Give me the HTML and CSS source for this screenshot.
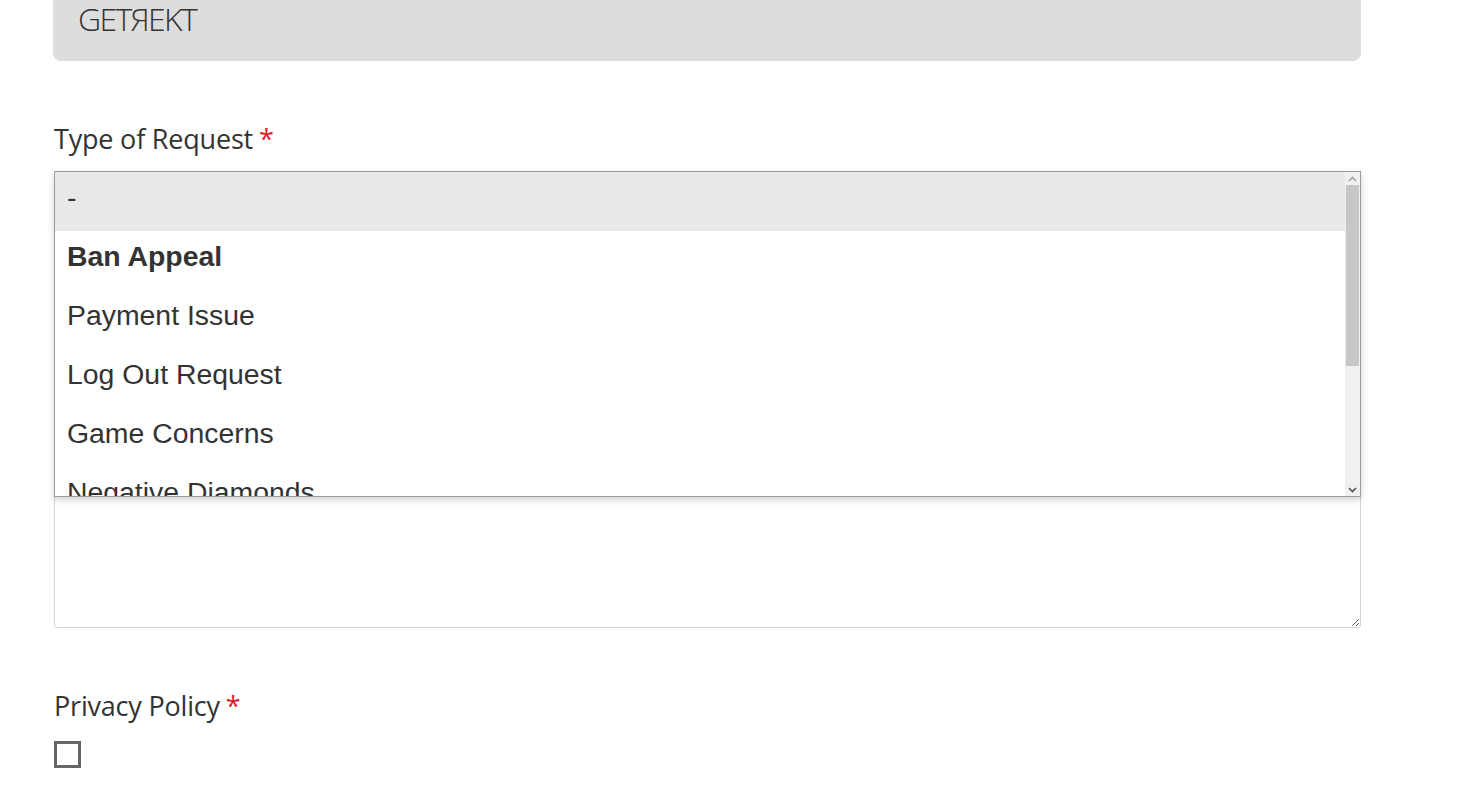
FILE: index.html
```html
<!DOCTYPE html>
<html>
<head>
<meta charset="utf-8">
<link rel="stylesheet" href="styles.css">
</head>
<body>
<div class="page">
  <div class="brand-box"><span class="brand">GETЯEKT</span></div>

  <div class="field field-type">
    <label class="label">Type of Request<span class="req">*</span></label>
    <div class="select-wrap">
      <div class="select-closed"></div>
      <div class="dropdown">
        <ul class="options">
          <li class="opt opt-hover">-</li>
          <li class="opt opt-selected">Ban Appeal</li>
          <li class="opt">Payment Issue</li>
          <li class="opt">Log Out Request</li>
          <li class="opt">Game Concerns</li>
          <li class="opt">Negative Diamonds</li>
        </ul>
        <div class="scrollbar">
          <div class="sb-arrow sb-up">
            <svg width="9" height="6" viewBox="0 0 9 6"><path d="M1 5 L4.5 1.5 L8 5" fill="none" stroke="#a3a3a3" stroke-width="1.6"/></svg>
          </div>
          <div class="sb-track">
            <div class="sb-thumb"></div>
          </div>
          <div class="sb-arrow sb-down">
            <svg width="9" height="6" viewBox="0 0 9 6"><path d="M1 1 L4.5 4.5 L8 1" fill="none" stroke="#505050" stroke-width="1.6"/></svg>
          </div>
        </div>
      </div>
    </div>
  </div>

  <div class="field field-desc">
    <textarea class="textarea"></textarea>
  </div>

  <div class="field field-privacy">
    <label class="label">Privacy Policy<span class="req">*</span></label>
    <span class="checkbox"></span>
  </div>
</div>
</body>
</html>
```
FILE: styles.css
```css
html, body {
  margin: 0;
  padding: 0;
  background: #ffffff;
}
body {
  font-family: "Open Sans", "Noto Sans", sans-serif;
  color: #333333;
  overflow: hidden;
}
.page {
  width: 1308px;
  margin-left: 53px;
  display: flex;
  flex-direction: column;
}
.brand-box {
  height: 61px;
  background: #dddddd;
  border-radius: 0 0 8px 8px;
  padding-left: 25px;
  box-sizing: border-box;
}
.brand {
  display: block;
  font-family: "Open Sans", "Noto Sans", sans-serif;
  font-weight: 300;
  font-size: 32px;
  line-height: 38px;
  color: #333333;
  letter-spacing: -1.7px;
}
.field {
  display: flex;
  flex-direction: column;
  padding-left: 1px;
}
.label {
  display: block;
  font-size: 27px;
  line-height: 38px;
  color: #333333;
  letter-spacing: -0.2px;
}
.req {
  color: #d9232d;
  margin-left: 6px;
}
.field-type {
  margin-top: 59px;
}
.field-type .label {
  margin-bottom: 13px;
}
.select-wrap {
  position: relative;
}
.select-closed {
  height: 54px;
  box-sizing: border-box;
  border: 1px solid #cccccc;
  border-radius: 3px;
}
.dropdown {
  position: absolute;
  left: 0;
  top: 0;
  width: 1307px;
  height: 326px;
  box-sizing: border-box;
  border: 1px solid #9a9a9a;
  background: #ffffff;
  box-shadow: 0 3px 7px rgba(0, 0, 0, 0.18);
  display: flex;
  overflow: hidden;
  z-index: 5;
}
.options {
  list-style: none;
  margin: 0;
  padding: 0;
  flex: 1;
  overflow: hidden;
}
.opt {
  height: 59px;
  box-sizing: border-box;
  padding: 9px 0 0 12px;
  font-family: "Liberation Sans", Arial, sans-serif;
  font-size: 28.4px;
  line-height: 32px;
  color: #333333;
  white-space: nowrap;
}
.opt-hover {
  background: #e8e8e8;
}
.opt-selected {
  font-weight: bold;
}
.scrollbar {
  width: 15px;
  flex: none;
  display: flex;
  flex-direction: column;
  background: #f0f0f0;
}
.sb-arrow {
  height: 13px;
  display: flex;
  align-items: center;
  justify-content: center;
  flex: none;
}
.sb-track {
  flex: 1;
  display: flex;
  flex-direction: column;
}
.sb-thumb {
  height: 181px;
  background: #c6c6c6;
  margin: 0 1px;
}
.field-desc {
  margin-top: 35px;
}
.textarea {
  display: block;
  width: 1307px;
  height: 368px;
  box-sizing: border-box;
  border: 1px solid #d4d4d4;
  border-radius: 3px;
  resize: vertical;
  margin: 0;
  padding: 8px;
  font-family: "Open Sans", sans-serif;
  font-size: 16px;
}
.field-privacy {
  margin-top: 59px;
}
.field-privacy .label {
  margin-bottom: 16px;
}
.checkbox {
  display: block;
  width: 27px;
  height: 27px;
  box-sizing: border-box;
  border: 3px solid #666666;
  background: #ffffff;
}
```
